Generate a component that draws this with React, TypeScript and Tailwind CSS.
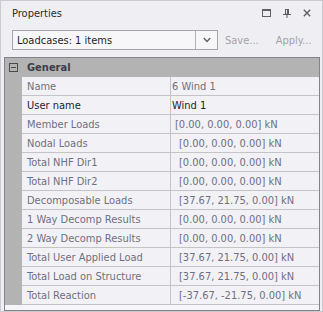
import React from "react";

type Row = { label: string; value: string; editable?: boolean; vpad: string };

const rows: Row[] = [
  { label: "Name", value: "6 Wind 1", vpad: "pl-[1px]" },
  { label: "User name", value: "Wind 1", editable: true, vpad: "pl-[1px]" },
  { label: "Member Loads", value: "[0.00, 0.00, 0.00] kN", vpad: "pl-[4px]" },
  { label: "Nodal Loads", value: "[0.00, 0.00, 0.00] kN", vpad: "pl-[8px]" },
  { label: "Total NHF Dir1", value: "[0.00, 0.00, 0.00] kN", vpad: "pl-[8px]" },
  { label: "Total NHF Dir2", value: "[0.00, 0.00, 0.00] kN", vpad: "pl-[8px]" },
  { label: "Decomposable Loads", value: "[37.67, 21.75, 0.00] kN", vpad: "pl-[8px]" },
  { label: "1 Way Decomp Results", value: "[0.00, 0.00, 0.00] kN", vpad: "pl-[8px]" },
  { label: "2 Way Decomp Results", value: "[0.00, 0.00, 0.00] kN", vpad: "pl-[8px]" },
  { label: "Total User Applied Load", value: "[37.67, 21.75, 0.00] kN", vpad: "pl-[8px]" },
  { label: "Total Load on Structure", value: "[37.67, 21.75, 0.00] kN", vpad: "pl-[8px]" },
  { label: "Total Reaction", value: "[-37.67, -21.75, 0.00] kN", vpad: "pl-[8px]" },
];

export default function App() {
  return (
    <div
      className="w-[323px] h-[312px] bg-[#efeff3] border border-[#cacad0] flex flex-col overflow-hidden text-[11px] leading-[13px]"
      style={{ fontFamily: '"DejaVu Sans Condensed", "Liberation Sans", sans-serif' }}
    >
      {/* title bar */}
      <div className="h-[24px] flex items-center pl-[11px] pr-[11px] shrink-0">
        <span className="text-[#2b2b2b] flex-1">Properties</span>
        <div className="flex items-center gap-[12px]">
          <svg width="9" height="8" viewBox="0 0 9 8">
            <rect x="0.5" y="0.5" width="8" height="7" fill="none" stroke="#606060" />
            <rect x="0" y="0" width="9" height="2" fill="#606060" />
          </svg>
          <svg width="8" height="9" viewBox="0 0 8 9">
            <rect x="2.5" y="0.5" width="3" height="4.5" fill="none" stroke="#606060" />
            <rect x="4" y="1" width="1" height="4" fill="#606060" />
            <rect x="0" y="5" width="8" height="1" fill="#606060" />
            <rect x="3.5" y="6" width="1" height="3" fill="#606060" />
          </svg>
          <svg width="8" height="8" viewBox="0 0 8 8">
            <path d="M0.8 0.8 L7.2 7.2 M7.2 0.8 L0.8 7.2" stroke="#606060" strokeWidth="1.4" />
          </svg>
        </div>
      </div>

      {/* toolbar */}
      <div className="flex items-center pl-[11px] pt-[5px] shrink-0">
        <div className="w-[206px] h-[20px] border border-[#a5a5aa] bg-[#f7f7fa] flex items-center">
          <span className="flex-1 pl-[4px] text-[#1e1e1e]">Loadcases: 1 items</span>
          <div className="w-[22px] h-full border-l border-[#b4b4b8] flex items-center justify-center">
            <svg width="8" height="6" viewBox="0 0 8 6">
              <path d="M0.8 1 L4 4.4 L7.2 1" fill="none" stroke="#606060" strokeWidth="1.4" />
            </svg>
          </div>
        </div>
        <span className="ml-[7px] text-[#a3a3a8]">Save...</span>
        <span className="ml-[17px] text-[#a3a3a8]">Apply...</span>
      </div>

      {/* property grid */}
      <div className="ml-[3px] mt-[7px] w-[316px] flex-1 border border-[#838388] bg-[#f6f6f9] flex flex-col">
        <div className="h-[19px] bg-[#b3b3b3] flex items-center shrink-0">
          <div className="w-[17px] flex justify-center">
            <svg width="9" height="9" viewBox="0 0 9 9">
              <rect x="0.5" y="0.5" width="8" height="8" fill="none" stroke="#4a4a4a" />
              <rect x="2" y="4" width="5" height="1" fill="#4a4a4a" />
            </svg>
          </div>
          <span className="pl-[5px] font-bold text-[#3d3d48]">General</span>
        </div>
        <div className="flex">
          <div className="w-[17px] bg-[#b3b3b3] shrink-0" />
          <div className="flex-1 flex flex-col bg-[#f2f2f6]">
            {rows.map((r) => (
              <div key={r.label} className="h-[19px] flex border-b border-[#c3c3c8]">
                <div
                  className={`w-[149px] pl-[5px] flex items-center border-r border-[#c3c3c8] ${
                    r.editable ? "text-[#23232e]" : "text-[#6f6f80]"
                  }`}
                >
                  {r.label}
                </div>
                <div
                  className={`flex-1 flex items-center ${r.vpad} ${
                    r.editable ? "text-[#23232e]" : "text-[#6f6f80]"
                  }`}
                >
                  {r.value}
                </div>
              </div>
            ))}
          </div>
        </div>
      </div>
    </div>
  );
}
